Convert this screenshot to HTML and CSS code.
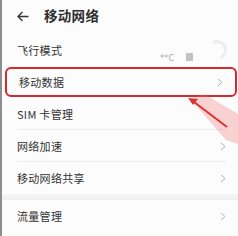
FILE: index.html
```html
<!DOCTYPE html>
<html>
<head>
<meta charset="utf-8">
<link rel="stylesheet" href="styles.css">
</head>
<body>
<div class="screen">
  <div class="header">
    <svg class="back" width="12" height="11" viewBox="0 0 12 11"><path d="M11.5 5.5H1M5.5 1L1 5.5L5.5 10" fill="none" stroke="#333" stroke-width="1.3"/></svg>
    <span class="title">移动网络</span>
  </div>
  <div class="row">
    <span class="label">飞行模式</span>
    <span class="toggle"></span>
    <span class="ghost">**C<i class="ghost-bar"></i></span>
  </div>
  <div class="row highlight">
    <span class="label">移动数据</span>
    <svg class="chev" width="6" height="9" viewBox="0 0 6 9"><path d="M1 1L5 4.5L1 8" fill="none" stroke="#b3b3b3" stroke-width="1"/></svg>
  </div>
  <div class="row">
    <span class="label">SIM 卡管理</span>
  </div>
  <div class="row divided">
    <span class="label">网络加速</span>
    <svg class="chev" width="6" height="9" viewBox="0 0 6 9"><path d="M1 1L5 4.5L1 8" fill="none" stroke="#b3b3b3" stroke-width="1"/></svg>
  </div>
  <div class="row divided">
    <span class="label">移动网络共享</span>
    <svg class="chev" width="6" height="9" viewBox="0 0 6 9"><path d="M1 1L5 4.5L1 8" fill="none" stroke="#b3b3b3" stroke-width="1"/></svg>
  </div>
  <div class="gap"></div>
  <div class="row">
    <span class="label">流量管理</span>
    <svg class="chev" width="6" height="9" viewBox="0 0 6 9"><path d="M1 1L5 4.5L1 8" fill="none" stroke="#b3b3b3" stroke-width="1"/></svg>
  </div>
  <svg class="pointer" width="238" height="236" viewBox="0 0 238 236">
    <polygon points="190,99 204,94 238,114 238,144 226,140" fill="rgba(238,110,110,0.3)"/>
    <line x1="227" y1="127" x2="194" y2="102" stroke="#d8342f" stroke-width="2"/>
    <polygon points="188,98 198,99 193,105" fill="#d8342f"/>
  </svg>
</div>
</body>
</html>
```
FILE: styles.css
```css
html, body {
  margin: 0;
  padding: 0;
  background: #fff;
}
.screen {
  position: relative;
  width: 238px;
  height: 236px;
  overflow: hidden;
  background: #fcfcfc;
  border-left: 2px solid #8e8e8e;
  box-sizing: border-box;
  font-family: "Noto Sans CJK SC", "Noto Sans", sans-serif;
  color: #333;
}
.header {
  height: 34px;
  display: flex;
  align-items: flex-start;
  padding: 8px 0 0 15px;
  box-sizing: border-box;
  gap: 15px;
}
.back {
  margin-top: 3px;
}
.title {
  font-size: 13.5px;
  font-weight: 700;
  line-height: 15px;
  letter-spacing: 0.3px;
  color: #2e2e2e;
}
.row {
  position: relative;
  height: 32px;
  display: flex;
  align-items: center;
  padding: 0 12px 0 15px;
  box-sizing: border-box;
}
.label {
  flex: 1;
  font-size: 11px;
  color: #333;
  letter-spacing: 0.3px;
}
.divided::before {
  content: "";
  position: absolute;
  top: -1px;
  left: 15px;
  right: 12px;
  height: 1px;
  background: #ececec;
}
.highlight {
  margin: 1px 1px 1px 3px;
  padding-left: 12px;
  border: 2px solid #d22a2d;
  border-radius: 6px;
  height: 30px;
}
.toggle {
  position: absolute;
  right: 11px;
  top: 6px;
  width: 14px;
  height: 14px;
  border-radius: 50%;
  border: 3px solid #ededed;
  border-left-color: transparent;
  border-bottom-color: transparent;
  transform: rotate(20deg);
}
.ghost {
  position: absolute;
  left: 158px;
  top: 19px;
  font-size: 8.5px;
  color: #adadad;
  font-family: "DejaVu Sans", sans-serif;
}
.ghost-bar {
  display: inline-block;
  width: 7px;
  height: 8px;
  margin-left: 12px;
  background: #c2c2c2;
}
.gap {
  height: 6px;
  background: linear-gradient(#f6f6f6, #efefef);
}
.pointer {
  position: absolute;
  left: -2px;
  top: 0;
}
```
